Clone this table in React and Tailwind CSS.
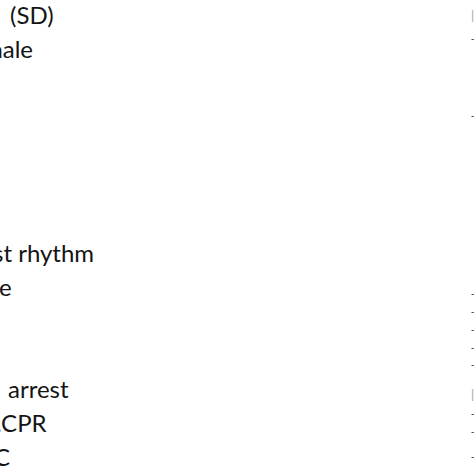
import React from 'react';

const rows = [
  { text: '(SD)', cls: 'ml-[10px]' },
  { text: 'male', cls: 'ml-[-17px]' },
  null,
  null,
  null,
  null,
  null,
  { text: 'st rhythm', cls: 'ml-[-7px]' },
  { text: 'e', cls: 'ml-[-1px]' },
  null,
  null,
  { text: 'arrest', cls: 'ml-[8px]' },
  { text: '.CPR', cls: 'ml-[-4px]' },
  { text: 'C', cls: 'ml-[-6px]' },
];

const App = () => {
  return (
    <div className="flex w-[474px] h-[474px] overflow-hidden bg-white text-[#141414]">
      {/* Label column, cut off on the left */}
      <div className="flex flex-col w-[471px] shrink-0 mt-[-2px] font-['Lato',sans-serif] text-[24px]">
        {rows.map((row, i) => (
          <div key={i} className="h-[34px] leading-[34px] whitespace-nowrap">
            {row ? <span className={`inline-block ${row.cls}`}>{row.text}</span> : null}
          </div>
        ))}
      </div>

      {/* Next column, only its first pixels show */}
      <div className="flex flex-col w-[20px] shrink-0 font-['Liberation_Sans',sans-serif] text-[#444]">
        <div className="mt-[9px] h-[12px] text-[12px] leading-[12px] text-[#aaa]">|</div>
        <div className="mt-[13px] h-[10px] text-[10px] leading-[10px]">-</div>
        <div className="mt-[67px] h-[10px] text-[10px] leading-[10px]">-</div>
        <div className="mt-[168px] h-[10px] text-[10px] leading-[10px]">-</div>
        <div className="mt-[8px] h-[10px] text-[10px] leading-[10px]">-</div>
        <div className="mt-[8px] h-[10px] text-[10px] leading-[10px]">-</div>
        <div className="mt-[8px] h-[10px] text-[10px] leading-[10px]">-</div>
        <div className="mt-[7px] h-[10px] text-[10px] leading-[10px]">-</div>
        <div className="mt-[18px] h-[12px] text-[12px] leading-[12px] text-[#aaa]">|</div>
        <div className="mt-[9px] h-[10px] text-[10px] leading-[10px]">-</div>
        <div className="mt-[8px] h-[10px] text-[10px] leading-[10px]">-</div>
        <div className="mt-[15px] h-[10px] text-[10px] leading-[10px]">-</div>
      </div>
    </div>
  );
};

export default App;
